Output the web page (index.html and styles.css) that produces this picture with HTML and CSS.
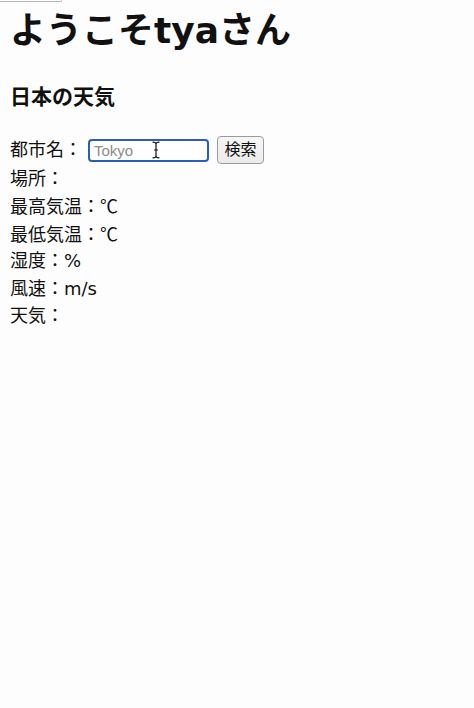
FILE: index.html
```html
<!DOCTYPE html>
<html lang="ja">
<head>
<meta charset="utf-8">
<title>天気</title>
<link rel="stylesheet" href="styles.css">
</head>
<body>
<div class="tab-edge"></div>
<h1 class="title">ようこそtyaさん</h1>
<h3 class="subtitle">日本の天気</h3>
<form class="search-row">
  <span class="label">都市名：</span>
  <span class="input-wrap">
    <input class="city-input" type="text" placeholder="Tokyo">
    <svg class="ibeam" width="8" height="18" viewBox="0 0 8 18" aria-hidden="true">
      <path d="M1 1.2 Q4 1.2 4 3 Q4 1.2 7 1.2 M4 3 V15 M1 16.8 Q4 16.8 4 15 Q4 16.8 7 16.8 M2.5 9 H5.5" fill="none" stroke="#fff" stroke-width="2.6" stroke-linecap="round"/>
      <path d="M1 1.2 Q4 1.2 4 3 Q4 1.2 7 1.2 M4 3 V15 M1 16.8 Q4 16.8 4 15 Q4 16.8 7 16.8 M2.5 9 H5.5" fill="none" stroke="#111" stroke-width="1.2" stroke-linecap="round"/>
    </svg>
  </span>
  <button class="search-btn" type="button">検索</button>
</form>
<div class="info">
  <div class="line">場所：</div>
  <div class="line">最高気温：<span class="unit">℃</span></div>
  <div class="line">最低気温：<span class="unit">℃</span></div>
  <div class="line">湿度：%</div>
  <div class="line">風速：m/s</div>
  <div class="line">天気：</div>
</div>
</body>
</html>
```

FILE: styles.css
```css
html, body {
  background: #fdfdfd;
}
body {
  margin: 0;
  padding: 0 10px;
  color: #111;
  font-family: "DejaVu Sans", "Noto Sans CJK JP", sans-serif;
  font-size: 18px;
}
.tab-edge {
  width: 61px;
  height: 1px;
  margin-left: -10px;
  border-right: 1px solid #b8b8b8;
  border-bottom: 1px solid #b8b8b8;
  border-bottom-right-radius: 3px;
}
.title {
  margin: 9px 0 0;
  font-size: 36px;
  line-height: 40px;
  font-weight: bold;
}
.subtitle {
  margin: 32px 0 0;
  font-size: 21px;
  line-height: 28px;
  font-weight: bold;
}
.search-row {
  display: flex;
  align-items: center;
  height: 28px;
  margin: 25px 0 0;
}
.label {
  line-height: 27.6px;
  margin-right: 6px;
}
.input-wrap {
  position: relative;
  display: flex;
}
.city-input {
  box-sizing: border-box;
  width: 121px;
  height: 23px;
  margin: 0;
  padding: 0 4px;
  border: 2px solid #2c5fb3;
  border-radius: 4px;
  background: #fff;
  font-family: "Liberation Sans", "Noto Sans CJK JP", sans-serif;
  font-size: 15px;
  color: #222;
  outline: none;
}
.city-input::placeholder {
  color: #8c8c8c;
}
.ibeam {
  position: absolute;
  left: 64px;
  top: 2px;
}
.search-btn {
  box-sizing: border-box;
  width: 47px;
  height: 28px;
  margin: 0 0 0 8px;
  padding: 0;
  border: 1px solid #9a9a9a;
  border-radius: 4px;
  background: linear-gradient(#f6f6f6, #ebebeb);
  color: #111;
  font-family: "Liberation Sans", "Noto Sans CJK JP", sans-serif;
  font-size: 16px;
  line-height: 26px;
}
.info {
  margin: 1px 0 0;
}
.line {
  line-height: 27.4px;
  height: 27.4px;
}
.unit {
  font-family: "Noto Sans CJK JP", sans-serif;
}
```
